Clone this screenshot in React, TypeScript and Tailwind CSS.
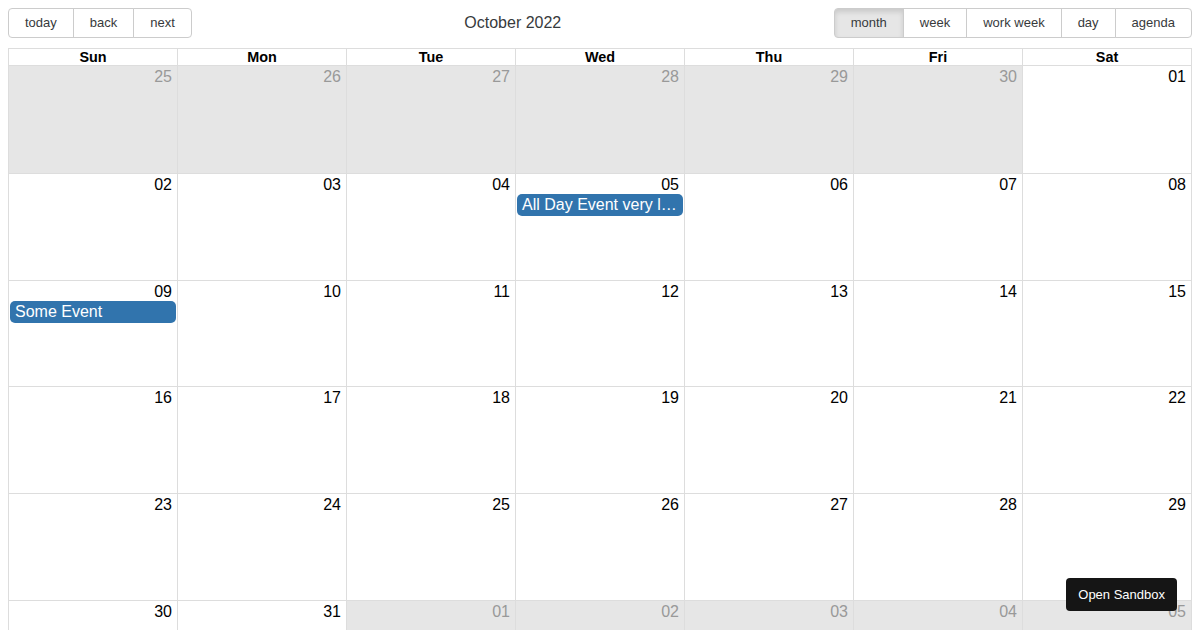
import React from "react"

const weeks: { d: string; off?: boolean; event?: string }[][] = [
  [
    { d: "25", off: true },
    { d: "26", off: true },
    { d: "27", off: true },
    { d: "28", off: true },
    { d: "29", off: true },
    { d: "30", off: true },
    { d: "01" },
  ],
  [
    { d: "02" },
    { d: "03" },
    { d: "04" },
    { d: "05", event: "All Day Event very long title" },
    { d: "06" },
    { d: "07" },
    { d: "08" },
  ],
  [
    { d: "09", event: "Some Event" },
    { d: "10" },
    { d: "11" },
    { d: "12" },
    { d: "13" },
    { d: "14" },
    { d: "15" },
  ],
  [
    { d: "16" },
    { d: "17" },
    { d: "18" },
    { d: "19" },
    { d: "20" },
    { d: "21" },
    { d: "22" },
  ],
  [
    { d: "23" },
    { d: "24" },
    { d: "25" },
    { d: "26" },
    { d: "27" },
    { d: "28" },
    { d: "29" },
  ],
  [
    { d: "30" },
    { d: "31" },
    { d: "01", off: true },
    { d: "02", off: true },
    { d: "03", off: true },
    { d: "04", off: true },
    { d: "05", off: true },
  ],
]

const days = ["Sun", "Mon", "Tue", "Wed", "Thu", "Fri", "Sat"]

const ButtonGroup = (props: { items: string[]; active?: string }) => (
  <div className="flex">
    {props.items.map((item, i) => (
      <button
        key={item}
        className={
          "h-[30px] px-4 text-[13px] text-[#373a3c] border border-[#ccc] " +
          (i > 0 ? "-ml-px " : "rounded-l-[4px] ") +
          (i === props.items.length - 1 ? "rounded-r-[4px] " : "") +
          (item === props.active
            ? "bg-[#e6e6e6] shadow-[inset_0_3px_5px_rgba(0,0,0,0.125)] border-[#adadad]"
            : "bg-white")
        }
      >
        {item}
      </button>
    ))}
  </div>
)

export default function App() {
  return (
    <div
      className="px-2 pt-2 bg-white text-black"
      style={{ fontFamily: '"Liberation Sans", Arial, sans-serif' }}
    >
      <div className="flex items-center mb-[10px]">
        <ButtonGroup items={["today", "back", "next"]} />
        <span className="flex-1 text-center text-[16px] text-[#373a3c]">October 2022</span>
        <ButtonGroup
          items={["month", "week", "work week", "day", "agenda"]}
          active="month"
        />
      </div>
      <div className="border border-[#ddd]">
        <div className="flex border-b border-[#ddd]">
          {days.map((day, i) => (
            <div
              key={day}
              className={
                "flex-1 text-center font-bold text-[14.4px] leading-[16px] " +
                (i > 0 ? "border-l border-[#ddd]" : "")
              }
            >
              {day}
            </div>
          ))}
        </div>
        {weeks.map((week, w) => (
          <div
            key={w}
            className={"flex h-[106.8px] " + (w > 0 ? "border-t border-[#ddd]" : "")}
          >
            {week.map((cell, i) => (
              <div
                key={i}
                className={
                  "flex-1 min-w-0 flex flex-col " +
                  (cell.off ? "bg-[#e6e6e6] " : "") +
                  (i > 0 ? "border-l border-[#ddd]" : "")
                }
              >
                <div
                  className={
                    "text-right pr-[5px] pt-[1px] text-[16px] leading-[19px] " +
                    (cell.off ? "text-[#999]" : "text-black")
                  }
                >
                  {cell.d}
                </div>
                {cell.event && (
                  <div className="pl-[1px] pr-[1px]">
                    <div className="bg-[#3174ad] text-white rounded-[5px] px-[5px] py-[2px] text-[16px] leading-[18px] truncate">
                      {cell.event}
                    </div>
                  </div>
                )}
              </div>
            ))}
          </div>
        ))}
      </div>
      <button className="fixed right-[23px] bottom-[19px] h-[33px] px-[12px] bg-[#151515] text-white text-[13px] rounded-[4px]">
        Open Sandbox
      </button>
    </div>
  )
}
